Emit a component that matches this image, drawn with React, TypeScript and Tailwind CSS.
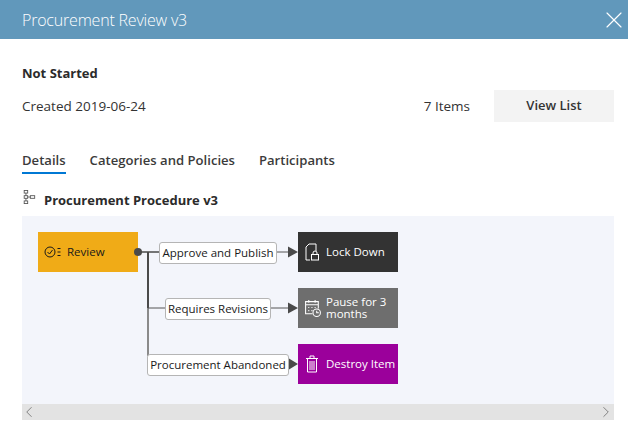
import React from "react";
import { X, ChevronLeft, ChevronRight } from "lucide-react";

const font = "font-['Open_Sans','Noto_Sans',sans-serif]";

const EdgeLabel = (props: { text: string; left: number; top: number; width: number }) => {
  return (
    <div
      className="absolute h-[22px] flex items-center justify-center bg-white border border-[#b5b5b5] rounded-[3px] text-[11.5px] text-[#1a1a1a] whitespace-nowrap"
      style={{ left: props.left, top: props.top, width: props.width }}
    >
      {props.text}
    </div>
  );
};

const ActionNode = (props: { top: number; bg: string; icon: React.ReactNode; children: React.ReactNode }) => {
  return (
    <div
      className={`absolute left-[276px] w-[100px] h-10 flex items-center pl-[7px] text-white text-[11.5px] leading-[12px] ${props.bg}`}
      style={{ top: props.top }}
    >
      <div className="w-[21px] shrink-0">{props.icon}</div>
      <div>{props.children}</div>
    </div>
  );
};

const Lines = () => {
  return (
    <svg className="absolute left-0 top-0" width="592" height="188">
      <path d="M116 36H137" stroke="#4a4a4a" strokeWidth="1.5" fill="none" />
      <path d="M126 36V92" stroke="#4a4a4a" strokeWidth="2" fill="none" />
      <path d="M126 92V140" stroke="#8a8a8a" strokeWidth="2" fill="none" />
      <path d="M126 92H143" stroke="#555" strokeWidth="1" fill="none" />
      <circle cx="116" cy="36" r="4" fill="#4a4a4a" />
      <path d="M255 36H268M249 92H268" stroke="#555" strokeWidth="1" fill="none" />
      <path d="M266 30.5L276 36L266 41.5Z M266 86.5L276 92L266 97.5Z M267 142.5L276 148L267 153.5Z" fill="#4a4a4a" />
    </svg>
  );
};

const App = () => {
  return (
    <div className={`w-[628px] h-[437px] bg-white overflow-hidden ${font}`}>
      <header className="h-[39px] bg-[#6198bb] flex items-center justify-between pl-[22px]">
        <h1 className="text-[16px] font-light tracking-[-0.2px] text-white">Procurement Review v3</h1>
        <X size={28} strokeWidth={1} className="text-white" />
      </header>

      <main className="pl-[22px] pr-[14px]">
        <div className="mt-[26px] text-[13px] font-bold text-[#2b2b2b] leading-4">Not Started</div>
        <div className="mt-[9px] flex items-center h-8 text-[13.5px] text-[#333]">
          <span>Created 2019-06-24</span>
          <span className="ml-auto mr-6">7 Items</span>
          <button className="w-[120px] h-8 bg-[#f3f3f3] text-[13px] font-semibold text-[#333]">View List</button>
        </div>

        <nav className="mt-[29px] flex gap-6 text-[13.1px] font-semibold text-[#3b3b3b]">
          <div className="pb-[3px] border-b-2 border-[#0078d4] leading-[18px]">Details</div>
          <div className="leading-[18px]">Categories and Policies</div>
          <div className="leading-[18px]">Participants</div>
        </nav>

        <div className="mt-[17px] flex items-center gap-2 h-5">
          <svg width="14" height="14" viewBox="0 0 14 16" fill="none" stroke="#555" strokeWidth="1" className="mb-2">
            <rect x="1.5" y="0.5" width="4" height="3" />
            <rect x="1.5" y="6.5" width="4" height="3" />
            <rect x="1.5" y="12.5" width="4" height="3" />
            <rect x="8.5" y="6.5" width="5" height="3" />
            <path d="M3.5 3.5v3M3.5 9.5v3M5.5 8h3" />
          </svg>
          <span className="text-[13px] font-bold text-[#2b2b2b]">Procurement Procedure v3</span>
        </div>

        <section className="mt-[5px] w-[592px] h-[204px] flex flex-col">
          <div className="relative h-[188px] bg-[#f3f5fb]">
            <div className="absolute left-4 top-4 w-[100px] h-10 bg-[#f0ab17] flex items-center pl-1.5 gap-[5px] text-[11.5px] text-[#1a1a1a]">
              <svg width="18" height="12" viewBox="0 0 18 12" fill="none" stroke="#1a1a1a" strokeWidth="1">
                <circle cx="6" cy="6" r="5" />
                <path d="M3.5 6l2 2 3-4M13.5 2.5h3M13.5 6h3M13.5 9.5h3" />
              </svg>
              <span>Review</span>
            </div>
            <Lines />
            <EdgeLabel text="Approve and Publish" left={137} top={26} width={118} />
            <EdgeLabel text="Requires Revisions" left={143} top={82} width={106} />
            <EdgeLabel text="Procurement Abandoned" left={125} top={138} width={142} />
            <ActionNode
              top={16}
              bg="bg-[#333333]"
              icon={
                <svg width="14" height="18" viewBox="0 0 14 18" fill="none" stroke="white" strokeWidth="1">
                  <path d="M5 17H1V4L4 1H11V8" />
                  <rect x="6.5" y="11.5" width="7" height="5.5" />
                  <path d="M8 11.5V10a2 2 0 0 1 4 0v1.5" />
                </svg>
              }
            >
              Lock Down
            </ActionNode>
            <ActionNode
              top={72}
              bg="bg-[#6e6e6e]"
              icon={
                <svg width="16" height="18" viewBox="0 0 15 17" fill="none" stroke="white" strokeWidth="1">
                  <path d="M7 14H0.5V2.5H12.5V9M0.5 5.5H12.5M3.5 1v2.5M9.5 1v2.5M3 8h1M6 8h1M9 8h1M3 11h1M6 11h1" />
                  <circle cx="11" cy="13" r="3.5" />
                  <path d="M11 11v2h2" />
                </svg>
              }
            >
              Pause for 3 months
            </ActionNode>
            <ActionNode
              top={128}
              bg="bg-[#9b009b]"
              icon={
                <svg width="14" height="18" viewBox="0 0 14 18" fill="none" stroke="white" strokeWidth="1">
                  <path d="M1 3.5H13M5 3.5V1H9V3.5M2.5 3.5V17H11.5V3.5M5 6V15M7 6V15M9 6V15" />
                </svg>
              }
            >
              <span className="whitespace-nowrap">Destroy Item</span>
            </ActionNode>
          </div>
          <div className="h-4 bg-[#e3e3e3] flex items-center justify-between text-[#777]">
            <ChevronLeft size={18} strokeWidth={1.2} className="-ml-[2px]" />
            <ChevronRight size={18} strokeWidth={1.2} className="-mr-px" />
          </div>
        </section>
      </main>
    </div>
  );
};

export default App;
